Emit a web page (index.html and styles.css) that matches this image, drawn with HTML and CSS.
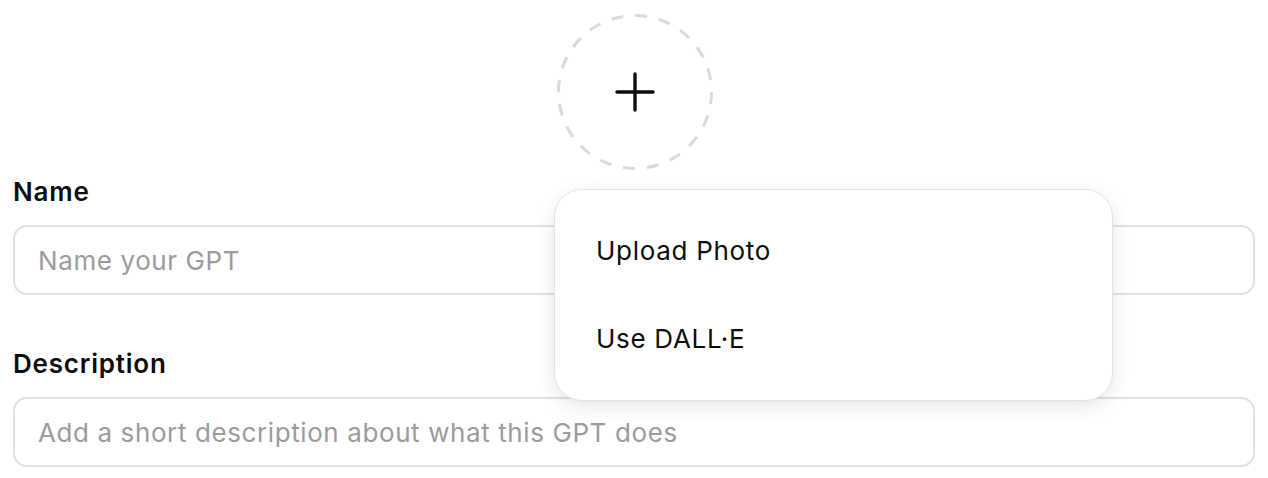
FILE: index.html
```html
<!DOCTYPE html>
<html>
<head>
    <title>Configure GPT</title>
    <link rel="stylesheet" href="styles.css">
</head>
<body>
    <div class="avatar-row">
        <div class="avatar-wrap">
            <button class="avatar" aria-label="Add image">
                <svg class="ring" width="156" height="156" viewBox="0 0 156 156">
                    <circle cx="78" cy="78" r="76.5" fill="none" stroke="#dadada" stroke-width="3" stroke-dasharray="12 12"/>
                </svg>
                <svg class="plus" width="40" height="40" viewBox="0 0 40 40">
                    <path d="M20 2v36M2 20h36" stroke="#0d0d0d" stroke-width="3.4" stroke-linecap="round" fill="none"/>
                </svg>
            </button>

            <div class="menu">
                <div class="menu-item">Upload Photo</div>
                <div class="menu-item">Use DALL·E</div>
            </div>
        </div>
    </div>

    <div class="field">
        <label class="label">Name</label>
        <input class="input" type="text" placeholder="Name your GPT">
    </div>

    <div class="field field-desc">
        <label class="label">Description</label>
        <input class="input" type="text" placeholder="Add a short description about what this GPT does">
    </div>
</body>
</html>
```

FILE: styles.css
```css
body {
    margin: 0;
    padding: 14px 13px 0;
    font-family: Inter, "Noto Sans", sans-serif;
    color: #0d0d0d;
    background: #fff;
}

.avatar-row { display: flex; justify-content: center; padding-left: 2px; }
.avatar-wrap { position: relative; }

.avatar {
    position: relative;
    width: 156px;
    height: 156px;
    padding: 0;
    border: none;
    background: none;
    border-radius: 50%;
    display: flex;
    align-items: center;
    justify-content: center;
    cursor: pointer;
}
.avatar .ring { position: absolute; top: 0; left: 0; }

.field { display: flex; flex-direction: column; margin-top: 6px; }
.field-desc { margin-top: 53px; }

.label {
    font-size: 26px;
    line-height: 32px;
    font-weight: 600;
    letter-spacing: 0.8px;
    margin-bottom: 17px;
}

.input {
    height: 70px;
    box-sizing: border-box;
    border: 2px solid #e0e0e0;
    border-radius: 14px;
    padding: 0 23px;
    font-family: inherit;
    font-size: 26px;
    letter-spacing: 0.6px;
    color: #0d0d0d;
    outline: none;
}
.input::placeholder { color: #9b9b9b; }

.menu {
    position: absolute;
    top: 175px;
    left: -3px;
    width: 559px;
    box-sizing: border-box;
    padding: 16px 0 18px;
    background: #fff;
    border: 1px solid #e3e3e3;
    border-radius: 28px;
    box-shadow: 0 6px 18px rgba(0,0,0,0.1);
    z-index: 10;
}
.menu-item {
    height: 88px;
    display: flex;
    align-items: center;
    padding-left: 41px;
    font-size: 26px;
    letter-spacing: 0.7px;
}
```
